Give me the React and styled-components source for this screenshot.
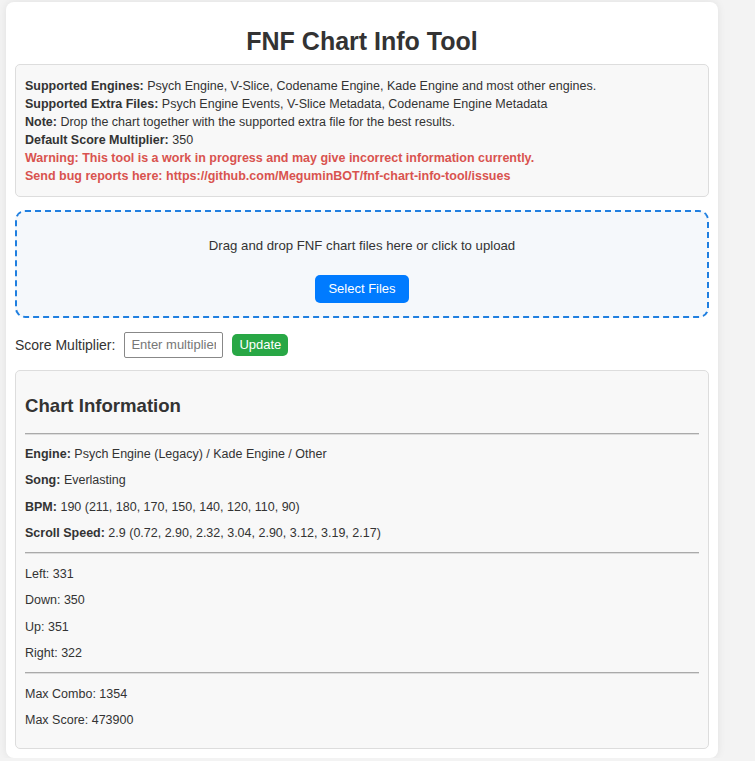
import React from "react";
import styled, { createGlobalStyle } from "styled-components";

const Global = createGlobalStyle`
  html, body { margin: 0; padding: 0; background: #f3f3f3; }
  body { font-family: "Liberation Sans", Arial, sans-serif; color: #333; }
`;

const Container = styled.div`
  box-sizing: border-box;
  width: 712px;
  margin: 2px 0 0 6px;
  padding: 24px 9px 9px;
  background: #fff;
  border-radius: 8px;
  box-shadow: 0 0 8px rgba(0, 0, 0, 0.08);
`;

const Title = styled.h1`
  margin: 0 0 8px;
  font-size: 25px;
  line-height: 30px;
  font-weight: bold;
  text-align: center;
  color: #333;
`;

const InfoBox = styled.div`
  background: #f8f8f8;
  border: 1px solid #ddd;
  border-radius: 5px;
  padding: ${(p) => p.$pad};
`;

const InfoLine = styled.div`
  font-size: 12.5px;
  line-height: 18.1px;
  color: ${(p) => (p.$warn ? "#d9534f" : "#333")};
  font-weight: ${(p) => (p.$warn ? "bold" : "normal")};
`;

const DropZone = styled.div`
  margin-top: 13px;
  border: 2px dashed #1f7fe0;
  border-radius: 10px;
  background: #f5f8fb;
  padding: 25px 10px 13px;
  text-align: center;
`;

const DropText = styled.p`
  margin: 0 0 20px;
  font-size: 13.2px;
  line-height: 18px;
  color: #333;
`;

const Button = styled.button`
  box-sizing: border-box;
  height: ${(p) => p.$h}px;
  padding: 0 ${(p) => p.$px}px;
  border: none;
  border-radius: 5px;
  background: ${(p) => p.$bg};
  color: #fff;
  font-family: "Liberation Sans", Arial, sans-serif;
  font-size: 13px;
  cursor: pointer;
`;

const ScoreRow = styled.div`
  display: flex;
  align-items: center;
  gap: 9px;
  margin-top: 14px;
  height: 26px;
`;

const Label = styled.label`
  font-size: 14px;
  color: #333;
`;

const Input = styled.input`
  box-sizing: border-box;
  width: 99px;
  height: 26px;
  border: 1px solid #888;
  border-radius: 2px;
  padding: 0 6px;
  font-family: "Liberation Sans", Arial, sans-serif;
  font-size: 13px;
  &::placeholder { color: #777; }
`;

const ChartBox = styled(InfoBox)`
  margin-top: 12px;
`;

const Heading = styled.h2`
  margin: 13px 0 15px;
  font-size: 18.6px;
  line-height: 24px;
  font-weight: bold;
  color: #333;
`;

const Rule = styled.hr`
  margin: 11.5px 0;
  border: 0;
  border-top: 1px solid #aaa;
  border-bottom: 1px solid #ddd;
`;

const Row = styled.p`
  margin: 10.3px 0;
  font-size: 12.5px;
  line-height: 16px;
  color: #333;
`;

const infoLines = [
  ["Supported Engines:", " Psych Engine, V-Slice, Codename Engine, Kade Engine and most other engines."],
  ["Supported Extra Files:", " Psych Engine Events, V-Slice Metadata, Codename Engine Metadata"],
  ["Note:", " Drop the chart together with the supported extra file for the best results."],
  ["Default Score Multiplier:", " 350"],
];

export default function App() {
  return (
    <>
      <Global />
      <Container>
        <Title>FNF Chart Info Tool</Title>
        <InfoBox $pad="12px 9px 10px">
          {infoLines.map(([b, t]) => (
            <InfoLine key={b}>
              <b>{b}</b>
              {t}
            </InfoLine>
          ))}
          <InfoLine $warn>Warning: This tool is a work in progress and may give incorrect information currently.</InfoLine>
          <InfoLine $warn>Send bug reports here: https://github.com/MeguminBOT/fnf-chart-info-tool/issues</InfoLine>
        </InfoBox>
        <DropZone>
          <DropText>Drag and drop FNF chart files here or click to upload</DropText>
          <Button $bg="#007bff" $h={28} $px={13}>Select Files</Button>
        </DropZone>
        <ScoreRow>
          <Label>Score Multiplier:</Label>
          <Input placeholder="Enter multiplier" />
          <Button $bg="#28a745" $h={22} $px={7}>Update</Button>
        </ScoreRow>
        <ChartBox $pad="10px 9px 10px">
          <Heading>Chart Information</Heading>
          <Rule />
          <Row><b>Engine:</b> Psych Engine (Legacy) / Kade Engine / Other</Row>
          <Row><b>Song:</b> Everlasting</Row>
          <Row><b>BPM:</b> 190 (211, 180, 170, 150, 140, 120, 110, 90)</Row>
          <Row><b>Scroll Speed:</b> 2.9 (0.72, 2.90, 2.32, 3.04, 2.90, 3.12, 3.19, 2.17)</Row>
          <Rule />
          <Row>Left: 331</Row>
          <Row>Down: 350</Row>
          <Row>Up: 351</Row>
          <Row>Right: 322</Row>
          <Rule />
          <Row>Max Combo: 1354</Row>
          <Row>Max Score: 473900</Row>
        </ChartBox>
      </Container>
    </>
  );
}
